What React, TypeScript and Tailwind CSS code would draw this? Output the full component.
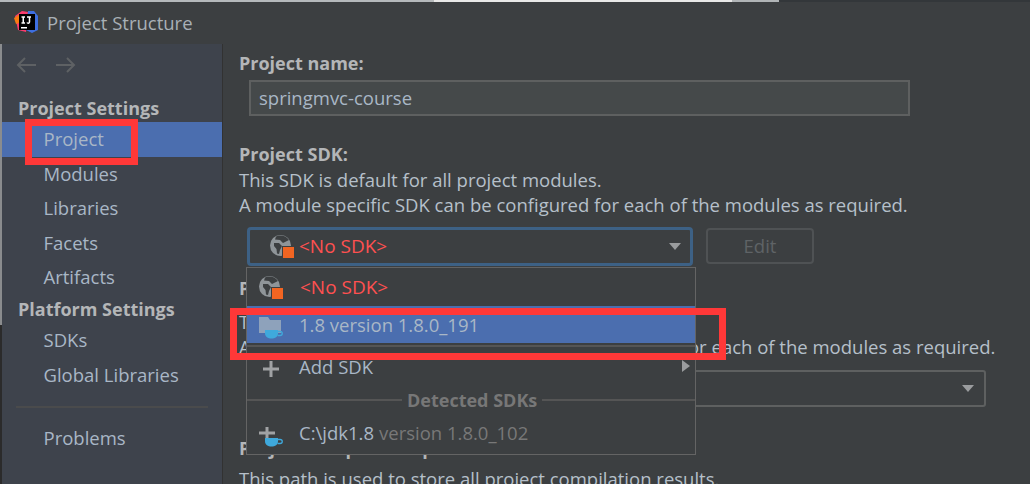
const font = { fontFamily: '"Open Sans", "Noto Sans", sans-serif' };

function Caret() {
    return <div className="w-0 h-0 border-x-[6px] border-x-transparent border-t-[7px] border-t-[#9a9c9e]" />;
}

function GlobeIcon() {
    return (
        <svg width="24" height="23" viewBox="0 0 24 23" className="shrink-0">
            <circle cx="10.500" cy="10.500" r="10.500" fill="#8f9599" />
            <path d="M6 1.500 C10 -0.500 16 0.500 19 5 L13 8 L10 5 L5 4.500 Z" fill="#3c3f41" />
            <path d="M4 8 L9 8 L12 11 L10 15 L9 19 L7 18.500 L6.500 14 L4 11 Z" fill="#3c3f41" />
            <rect x="12" y="11" width="12" height="12" fill="#3c3f41" />
            <rect x="13" y="12" width="11" height="11" fill="#f26522" />
        </svg>
    );
}

function CupIcon() {
    return (
        <svg width="18" height="9" viewBox="0 0 18 9">
            <path d="M0 0 H13 V3 C13 7 10 8.500 6.500 8.500 C3 8.500 0 7 0 3 Z" fill="#3fa9dc" />
            <path d="M13 1.500 H15 C18 1.500 18 5.500 15 5.500 H12.500" fill="none" stroke="#3fa9dc" strokeWidth="1.300" />
        </svg>
    );
}

function NavItem({ label, active }: { label: string; active?: boolean }) {
    return (
        <div className={`h-[34.500px] pl-[41.500px] flex items-center text-[18.500px] text-[#a9b7c6] ${active ? "bg-[#4b6eaf]" : ""}`}>
            {label}
        </div>
    );
}

function SectionTitle({ label }: { label: string }) {
    return <div className="pl-[16px] text-[18px] leading-[24px] font-bold text-[#b4b6b8]">{label}</div>;
}

function Sidebar() {
    return (
        <div className="w-[220px] h-full bg-[#3e434c] pt-[9px] shrink-0">
            <div className="flex items-center gap-[20px] pl-[14px] h-[24px]">
                <svg width="20" height="16" viewBox="0 0 20 16" fill="none" stroke="#5e6164" strokeWidth="2">
                    <path d="M20 8 H2 M9 1 L2 8 L9 15" />
                </svg>
                <svg width="20" height="16" viewBox="0 0 20 16" fill="none" stroke="#5e6164" strokeWidth="2">
                    <path d="M0 8 H18 M11 1 L18 8 L11 15" />
                </svg>
            </div>
            <div className="mt-[19px]">
                <SectionTitle label="Project Settings" />
                <div className="mt-[2px]">
                    <NavItem label="Project" active />
                    <NavItem label="Modules" />
                    <NavItem label="Libraries" />
                    <NavItem label="Facets" />
                    <NavItem label="Artifacts" />
                </div>
            </div>
            <div className="mt-[2.500px]">
                <SectionTitle label="Platform Settings" />
                <div className="mt-[2px]">
                    <NavItem label="SDKs" />
                    <NavItem label="Global Libraries" />
                </div>
            </div>
            <div className="mt-[14px] mx-[14px] h-[2px] bg-[#4a4b4c]" />
            <div className="mt-[13px]">
                <NavItem label="Problems" />
            </div>
        </div>
    );
}

function Popup() {
    return (
        <div className="absolute left-[246px] top-[267px] w-[450px] h-[188px] bg-[#3c3f41] border border-[#646464] text-[18.500px]">
            <div className="h-[38px] flex items-center pl-[12px] gap-[17px] text-[#ff5050]">
                <GlobeIcon />
                <span className="text-[19px]">&lt;No SDK&gt;</span>
            </div>
            <div className="h-[37px] bg-[#4b6eaf] flex items-center text-[#a9b7c6] pl-[52px] relative">
                <svg width="24" height="20" viewBox="0 0 24 20" className="absolute left-[12px] top-[10px]">
                    <path d="M0 1 H9 L11 4 H22 V17 H0 Z" fill="#8ea2bb" />
                </svg>
                <div className="absolute left-[18px] top-[24px]">
                    <CupIcon />
                </div>
                1.8 version 1.8.0_191
            </div>
            <div className="h-[4px] border-b-[2px] border-[#555555]" />
            <div className="h-[40px] flex items-center pl-[52px] text-[#a9b7c6] relative">
                <svg width="16" height="16" viewBox="0 0 16 16" className="absolute left-[16px] top-[14px]">
                    <path d="M8 0 V16 M0 8 H16" stroke="#a0a2a4" strokeWidth="3" />
                </svg>
                Add SDK
                <div className="absolute right-[5px] top-[13px] w-0 h-0 border-y-[6px] border-y-transparent border-l-[8px] border-l-[#9a9c9e]" />
            </div>
            <div className="flex items-center h-[26px]">
                <div className="w-[155px] h-[2px] bg-[#555555]" />
                <span className="px-[5px] text-[18px] font-bold text-[#777777]">Detected SDKs</span>
                <div className="flex-1 h-[2px] bg-[#555555]" />
            </div>
            <div className="h-[40px] flex items-center pl-[52px] relative text-[#a9b7c6]">
                <svg width="16" height="16" viewBox="0 0 16 16" className="absolute left-[12px] top-[14px]">
                    <path d="M8 0 V12 M0 6 H16" stroke="#a0a2a4" strokeWidth="3" />
                </svg>
                <div className="absolute left-[18px] top-[25px]">
                    <CupIcon />
                </div>
                <span>C:\jdk1.8</span>
                <span className="ml-[5px] text-[#787878]">version 1.8.0_102</span>
            </div>
        </div>
    );
}

function Main() {
    return (
        <div className="flex-1 pl-[16px] text-[18.500px] text-[#b6c0ca] overflow-hidden">
            <div className="mt-[7px] text-[18px] leading-[24px] font-bold text-[#b4b6b8]">Project name:</div>
            <div className="mt-[5px] ml-[10px] w-[661px] h-[36px] bg-[#45494a] border-2 border-[#5e6060] flex items-center pl-[8px] text-[#a9b7c6]">
                springmvc-course
            </div>
            <div className="mt-[26px] text-[18px] leading-[24px] font-bold text-[#b4b6b8]">Project SDK:</div>
            <div className="mt-[1px] leading-[25px]">This SDK is default for all project modules.</div>
            <div className="leading-[25px]">A module specific SDK can be configured for each of the modules as required.</div>
            <div className="flex items-start mt-[10px] gap-[13px] ml-[8px]">
                <div className="w-[446px] h-[39px] rounded-[4px] border-[3px] border-[#3d6185] flex items-center pl-[20px] gap-[5px] text-[#ff5050]">
                    <GlobeIcon />
                    <span className="text-[19px]">&lt;No SDK&gt;</span>
                    <div className="ml-auto mr-[9px]">
                        <Caret />
                    </div>
                </div>
                <div className="w-[108px] h-[36px] mt-[1px] rounded-[4px] border-2 border-[#4f5254] flex items-center justify-center text-[#5f6366]">
                    Edit
                </div>
            </div>
            <div className="mt-[10px] text-[18px] leading-[24px] font-bold text-[#b4b6b8]">Project language level:</div>
            <div className="mt-[9px] leading-[25px] tracking-[-0.3px]">This language level will be used for all project modules.</div>
            <div className="leading-[25px] whitespace-nowrap">A module specific language level can be configured for each of the modules as required.</div>
            <div className="mt-[11px] ml-[9px] w-[738px] h-[37px] rounded-[3px] border-2 border-[#5e6060] flex items-center justify-end pr-[10px]">
                <Caret />
            </div>
            <div className="mt-[29px] text-[18px] leading-[24px] font-bold text-[#b4b6b8]">Project compiler output:</div>
            <div className="mt-[6px] leading-[25px] whitespace-nowrap">This path is used to store all project compilation results.</div>
        </div>
    );
}

export default function App() {
    return (
        <div className="relative w-[1030px] h-[484px] overflow-hidden bg-[#3c3f41] flex flex-col" style={font}>
            {/* sliver of the window behind, along the top edge */}
            <div className="h-[2px] flex shrink-0 bg-[#33373a]">
                <div className="w-[434px] bg-[#b5b9bb]" />
                <div className="w-[298px] bg-[#e8e8e8]" />
                <div className="w-[47px] bg-[#b0b4b6]" />
            </div>
            <div className="h-[42px] flex items-center shrink-0 pl-[14px] gap-[9px] text-[18.500px] text-[#a9b0b6]">
                <svg width="24" height="24" viewBox="0 0 24 24" className="-mt-[2px]">
                    <path d="M1 6 L8 1 L14 2 L12 22 L4 20 Z" fill="#fc3b6c" />
                    <path d="M0 8 L6 4 L8 12 L2 14 Z" fill="#f97a12" />
                    <path d="M14 1 L20 1 L24 6 L24 20 L18 23 L12 20 Z" fill="#3e6fe0" />
                    <rect x="5" y="4" width="16" height="16" fill="#000000" />
                    <rect x="7" y="17" width="6" height="1.500" fill="#ffffff" />
                    <path d="M7.500 7 H11 M9.250 7 V13 M7.500 13 H11 M13 7 H17 M15.500 7 V12 C15.500 13.500 13.500 13.500 13 12.500" stroke="#ffffff" strokeWidth="1.500" fill="none" />
                </svg>
                Project Structure
            </div>
            <div className="flex flex-1 min-h-0">
                <div className="w-[2px] bg-[#8a8c8e] shrink-0" />
                <Sidebar />
                <div className="w-[1px] bg-[#323232] shrink-0" />
                <Main />
            </div>
            <div className="absolute left-0 top-[325px] w-[2px] h-[159px] bg-[#2b2b2b]" />
            <Popup />
            {/* red marks drawn over the screenshot */}
            <div className="absolute left-[25px] top-[119px] w-[113px] h-[46px] border-[7px] border-[#ff3838]" />
            <div className="absolute left-[230px] top-[308px] w-[496px] h-[52px] border-[7px] border-[#ff3838]" />
        </div>
    );
}
